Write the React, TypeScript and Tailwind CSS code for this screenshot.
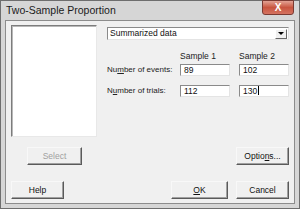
import React from 'react';

const font = { fontFamily: '"Liberation Sans", Arial, sans-serif' };

function Btn({ children, disabled, className = '' }: { children: React.ReactNode; disabled?: boolean; className?: string }) {
  return (
    <div
      className={`flex h-[18px] w-[53px] items-center justify-center border border-t-[#f8f8f8] border-l-[#f8f8f8] border-r-[#5a5a5a] border-b-[#5a5a5a] bg-[#f0f0f0] text-[8.5px] shadow-[inset_-1px_-1px_0_#a0a0a0] ${
        disabled ? 'text-[#a0a0a0]' : 'text-[#111]'
      } ${className}`}
    >
      {children}
    </div>
  );
}

function Field({ value, caret }: { value: string; caret?: boolean }) {
  return (
    <div className="flex h-[12px] w-[50px] items-center border border-t-[#8a8a8a] border-l-[#8a8a8a] border-r-[#e4e4e4] border-b-[#e4e4e4] bg-white pl-[3px] text-[8.5px] leading-none text-[#111]">
      {value}
      {caret && <span className="ml-[1px] inline-block h-[9px] w-[1px] bg-black" />}
    </div>
  );
}

export default function App() {
  return (
    <div className="flex h-[209px] w-[300px] flex-col border border-[#6e6e6e] bg-[#d6d6d6]" style={font}>
      {/* title bar */}
      <div className="relative flex h-[19px] shrink-0 items-center pl-[5px] text-[10.5px] text-[#1b1b1b]">
        Two-Sample Proportion
        <div className="absolute right-[5px] top-[-1px] flex h-[15px] w-[32px] items-center justify-center rounded-b-[3px] border border-[#7a3a32] bg-gradient-to-b from-[#e2a294] via-[#c8553f] to-[#d47260] text-[10px] font-bold text-white">
          X
        </div>
      </div>

      {/* client */}
      <div className="mx-[4px] mb-[4px] flex flex-1 flex-col border border-[#8c8c8c] bg-[#f0f0f0] px-[5px] pt-[4px]">
        <div className="flex gap-[10px]">
          <div className="h-[112px] w-[87px] border border-t-[#7c7c7c] border-l-[#7c7c7c] border-r-[#e8e8e8] border-b-[#e8e8e8] bg-white shadow-[inset_1px_1px_0_#b8b8b8]" />
          <div className="flex flex-1 flex-col pt-[2px]">
            <div className="flex h-[13px] w-[182px] items-center justify-between border border-t-[#8a8a8a] border-l-[#8a8a8a] border-r-[#e4e4e4] border-b-[#e4e4e4] bg-white pl-[2px] text-[8.5px] text-[#111]">
              <span>Summarized data</span>
              <div className="mr-[1px] flex h-[10px] w-[12px] items-center justify-center border border-t-[#fff] border-l-[#fff] border-r-[#666] border-b-[#666] bg-[#f0f0f0]">
                <svg width="6" height="4" viewBox="0 0 6 4">
                  <path d="M0 0h6L3 3z" fill="#000" />
                </svg>
              </div>
            </div>
            <div className="mt-[10px] flex text-[8.5px] text-[#222]">
              <div className="w-[73px]" />
              <div className="w-[59px]">Sample 1</div>
              <div>Sample 2</div>
            </div>
            <div className="mt-[1px] flex items-center text-[8px] text-[#222]">
              <div className="w-[73px] whitespace-nowrap">
                Nu<span className="underline">m</span>ber of events:
              </div>
              <Field value="89" />
              <div className="w-[9px]" />
              <Field value="102" />
            </div>
            <div className="mt-[9px] flex items-center text-[8px] text-[#222]">
              <div className="w-[73px] whitespace-nowrap">
                N<span className="underline">u</span>mber of trials:
              </div>
              <Field value="112" />
              <div className="w-[9px]" />
              <Field value="130" caret />
            </div>
          </div>
        </div>

        <div className="mt-[10px] flex items-center justify-between">
          <Btn disabled className="ml-[16px] w-[55px]">
            Select
          </Btn>
          <Btn>
            Optio<span className="underline">n</span>s...
          </Btn>
        </div>

        <div className="mt-[16px] flex items-center">
          <Btn>Help</Btn>
          <div className="flex-1" />
          <Btn className="w-[57px]">
            <span className="underline">O</span>K
          </Btn>
          <div className="w-[8px]" />
          <Btn>Cancel</Btn>
        </div>
      </div>
    </div>
  );
}
